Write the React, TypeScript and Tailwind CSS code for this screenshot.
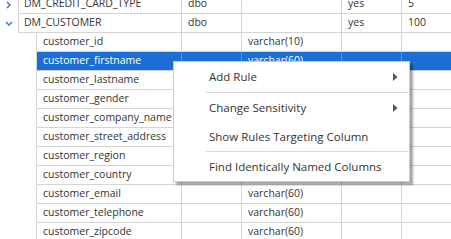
import type { ReactNode } from "react"

type Cells = [string, string, string, string, string]

const tableRows: { name: string; open: boolean; cells: Cells }[] = [
  { name: "DM_CREDIT_CARD_TYPE", open: false, cells: ["", "dbo", "", "yes", "5"] },
  { name: "DM_CUSTOMER", open: true, cells: ["", "dbo", "", "yes", "100"] },
]

const columns: [string, string][] = [
  ["customer_id", "varchar(10)"],
  ["customer_firstname", "varchar(60)"],
  ["customer_lastname", "varchar(60)"],
  ["customer_gender", "varchar(10)"],
  ["customer_company_name", "varchar(60)"],
  ["customer_street_address", "varchar(60)"],
  ["customer_region", "varchar(60)"],
  ["customer_country", "varchar(60)"],
  ["customer_email", "varchar(60)"],
  ["customer_telephone", "varchar(60)"],
  ["customer_zipcode", "varchar(60)"],
]

function Cell({
  width,
  selected,
  first,
  children,
}: {
  width: string
  selected?: boolean
  first?: boolean
  children?: ReactNode
}) {
  return (
    <div
      className={`${width} flex shrink-0 items-center overflow-hidden whitespace-nowrap border-b border-r border-b-[#d4d4d4] pl-[6px] ${
        first ? "border-l border-l-[#d4d4d4]" : ""
      } ${selected ? "border-r-[#5b93dc]" : "border-r-[#d4d4d4]"}`}
    >
      {children}
    </div>
  )
}

function Chevron({ open }: { open: boolean }) {
  return open ? (
    <svg width="8" height="5" viewBox="0 0 8 5" className="ml-[5px]">
      <path d="M1 1 L4 4 L7 1" fill="none" stroke="#3f72b8" strokeWidth="1.4" />
    </svg>
  ) : (
    <svg width="5" height="8" viewBox="0 0 5 8" className="ml-[6px]">
      <path d="M1 1 L4 4 L1 7" fill="none" stroke="#3f72b8" strokeWidth="1.4" />
    </svg>
  )
}

function Arrow() {
  return (
    <svg width="5" height="8" viewBox="0 0 5 8">
      <path d="M0 0 L4.5 4 L0 8 Z" fill="#555555" />
    </svg>
  )
}

function MenuItem({ label, sub, h }: { label: string; sub?: boolean; h: string }) {
  return (
    <div className={`${h} flex items-center justify-between pl-[35px] pr-[11px]`}>
      <span>{label}</span>
      {sub ? <Arrow /> : null}
    </div>
  )
}

export default function App() {
  return (
    <div className="relative h-[239px] w-[451px] overflow-hidden bg-white font-['Open_Sans',sans-serif] text-[10.5px] text-[#333333]">
      <div className="-mt-[5px]">
        {tableRows.map((t) => (
          <div key={t.name} className="flex h-[19px]">
            <div className="flex w-[18px] shrink-0 items-center">
              <Chevron open={t.open} />
            </div>
            <Cell width="w-[164px]" first>
              <span className="-ml-px">{t.name}</span>
            </Cell>
            <Cell width="w-[60px]">{t.cells[1]}</Cell>
            <Cell width="w-[100px]">{t.cells[2]}</Cell>
            <Cell width="w-[60px]">{t.cells[3]}</Cell>
            <Cell width="w-[60px]">{t.cells[4]}</Cell>
          </div>
        ))}
        {columns.map(([name, type]) => {
          const sel = name === "customer_firstname"
          return (
            <div key={name} className="flex h-[19px]">
              <div className="w-[36px] shrink-0" />
              <div className={`flex ${sel ? "bg-[#1b6ed3] text-white" : ""}`}>
                <Cell width="w-[146px]" first selected={sel}>
                  {name}
                </Cell>
                <Cell width="w-[60px]" selected={sel} />
                <Cell width="w-[100px]" selected={sel}>
                  {type}
                </Cell>
                <Cell width="w-[60px]" selected={sel} />
                <Cell width="w-[60px]" selected={sel} />
              </div>
            </div>
          )
        })}
      </div>

      <div className="absolute left-[173px] top-[61px] w-[237px] border border-[#cccccc] bg-white text-[11.5px] shadow-[3px_3px_2px_rgba(0,0,0,0.35)]">
        <MenuItem label="Add Rule" sub h="h-[30px]" />
        <div className="ml-[32px] mr-px h-px bg-[#d7d7d7]" />
        <MenuItem label="Change Sensitivity" sub h="h-[29px]" />
        <MenuItem label="Show Rules Targeting Column" h="h-[29px]" />
        <div className="ml-[32px] mr-px h-px bg-[#d7d7d7]" />
        <MenuItem label="Find Identically Named Columns" h="h-[29px]" />
      </div>
    </div>
  )
}
